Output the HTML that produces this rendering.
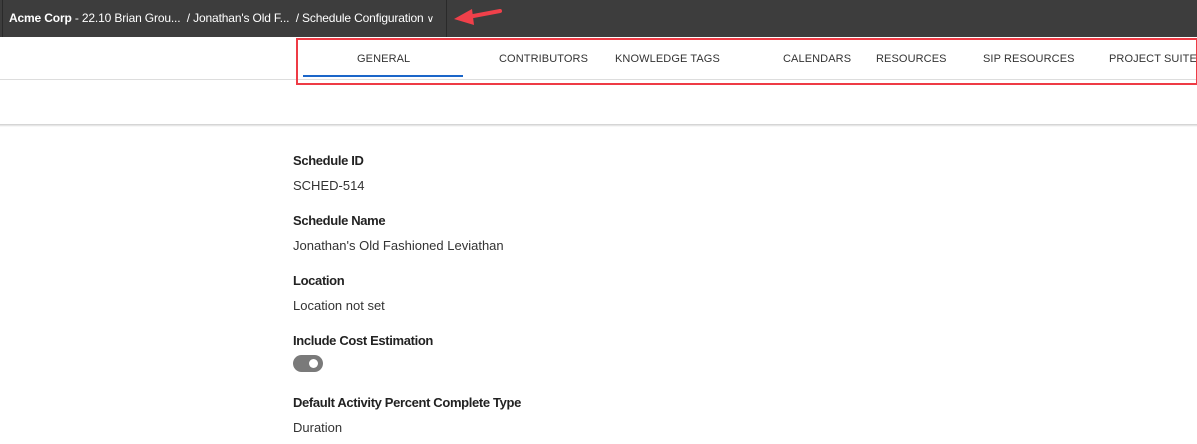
<!DOCTYPE html>
<html><head><style>
body{margin:0;width:1197px;height:444px;overflow:hidden;background:#fff;font-family:"Liberation Sans",sans-serif;position:relative}
.top{position:absolute;left:0;top:0;width:1197px;height:37px;background:#3d3d3d}
.crumb{position:absolute;left:9px;top:11px;color:#fff;font-size:12px;white-space:nowrap;letter-spacing:-0.15px}
.sep{position:absolute;top:0;width:1px;height:37px;background:#2a2a2a}
.tabs{position:absolute;left:0;top:37px;width:1197px;height:42px;border-bottom:1px solid #ddd}
.tab{position:absolute;top:16px;font-size:11px;color:#333;white-space:nowrap;letter-spacing:0.1px}
.shadow{position:absolute;left:0;top:124px;width:1197px;height:3px;background:linear-gradient(#ccc,#fff)}
.lbl{position:absolute;left:293px;font-size:13px;font-weight:bold;color:#222;letter-spacing:-0.35px}
.val{position:absolute;left:293px;font-size:13px;color:#333}
</style></head><body>
<div class="top">
<div class="sep" style="left:2px"></div><div class="sep" style="left:446px"></div>
<div class="crumb"><b>Acme Corp</b> - 22.10 Brian Grou...&nbsp; / Jonathan's Old F...&nbsp; / Schedule Configuration <span style="font-size:10px">&#8744;</span></div>
<svg style="position:absolute;left:448px;top:5px" width="56" height="24"><path d="M52 6 L20 12" stroke="#f0404a" stroke-width="4" stroke-linecap="round"/><path d="M6 14 L24 4 L26 20 Z" fill="#f0404a"/></svg>
</div>
<div class="tabs">
<div class="tab" style="left:357px">GENERAL</div>
<div class="tab" style="left:499px">CONTRIBUTORS</div>
<div class="tab" style="left:615px">KNOWLEDGE TAGS</div>
<div class="tab" style="left:783px">CALENDARS</div>
<div class="tab" style="left:876px">RESOURCES</div>
<div class="tab" style="left:983px">SIP RESOURCES</div>
<div class="tab" style="left:1109px">PROJECT SUITE</div>
<div style="position:absolute;left:303px;top:38px;width:160px;height:2px;background:#1b66c9"></div>
</div>
<div style="position:absolute;left:296px;top:38px;width:898px;height:43px;border:2px solid #ee3b45"></div>
<div class="shadow"></div>
<div class="lbl" style="top:153px">Schedule ID</div>
<div class="val" style="top:178px">SCHED-514</div>
<div class="lbl" style="top:213px">Schedule Name</div>
<div class="val" style="top:238px">Jonathan's Old Fashioned Leviathan</div>
<div class="lbl" style="top:273px">Location</div>
<div class="val" style="top:298px">Location not set</div>
<div class="lbl" style="top:333px">Include Cost Estimation</div>
<div style="position:absolute;left:293px;top:355px;width:30px;height:17px;border-radius:9px;background:#7a7a7a"><div style="position:absolute;left:16px;top:4px;width:9px;height:9px;border-radius:50%;background:#fff"></div></div>
<div class="lbl" style="top:395px">Default Activity Percent Complete Type</div>
<div class="val" style="top:420px">Duration</div>
</body></html>
